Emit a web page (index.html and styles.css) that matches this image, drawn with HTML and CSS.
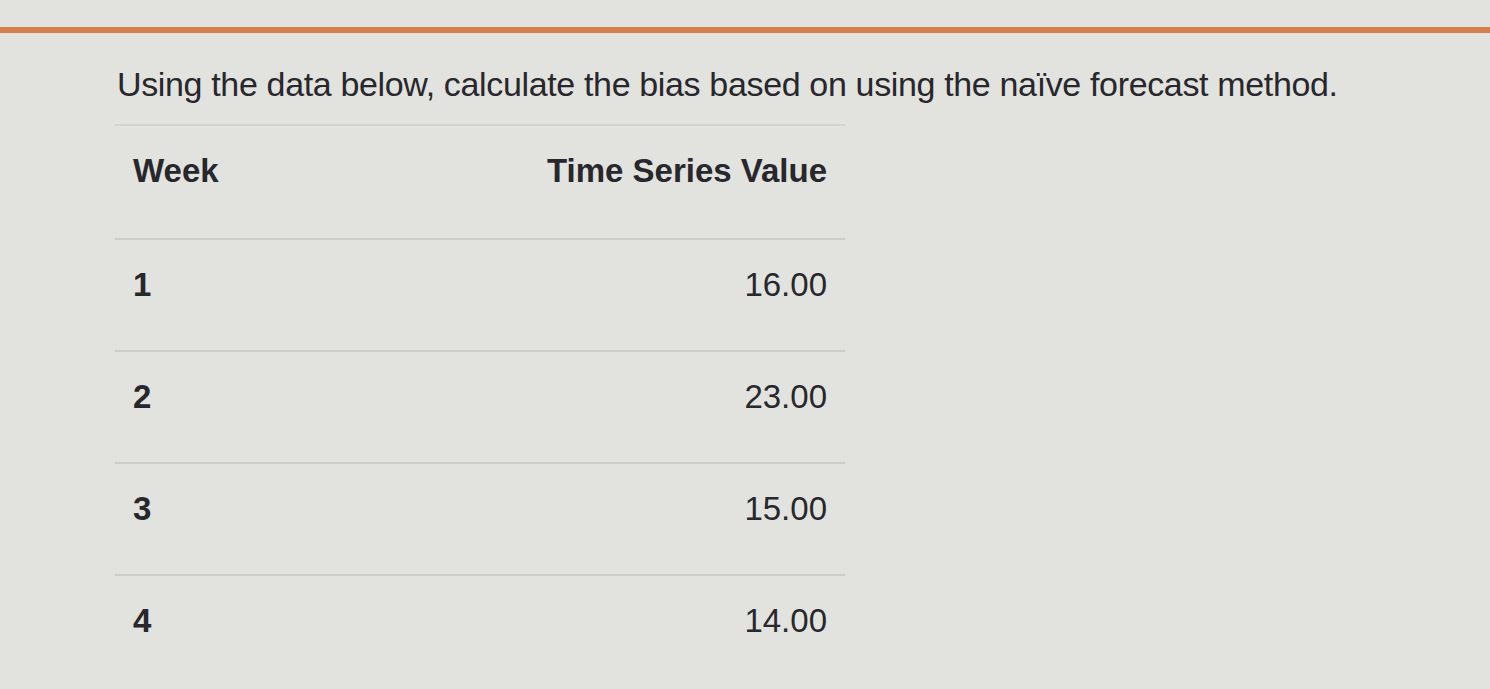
FILE: index.html
```html
<!DOCTYPE html>
<html>
<head>
<meta charset="utf-8">
<link rel="stylesheet" href="styles.css">
</head>
<body>
<div class="topbar"></div>
<main class="content">
  <h1 class="question">Using the data below, calculate the bias based on using the naïve forecast method.</h1>
  <table class="data">
    <thead>
      <tr><th class="col-week">Week</th><th class="col-value">Time Series Value</th></tr>
    </thead>
    <tbody>
      <tr><td class="col-week">1</td><td class="col-value">16.00</td></tr>
      <tr><td class="col-week">2</td><td class="col-value">23.00</td></tr>
      <tr><td class="col-week">3</td><td class="col-value">15.00</td></tr>
      <tr><td class="col-week">4</td><td class="col-value">14.00</td></tr>
    </tbody>
  </table>
</main>
</body>
</html>
```
FILE: styles.css
```css
html, body {
  margin: 0;
  padding: 0;
  background: #e2e2df;
  height: 100%;
  overflow: hidden;
}
body {
  font-family: "Liberation Sans", Arial, sans-serif;
  color: #27272c;
}
.topbar {
  height: 6px;
  margin-top: 27px;
  background: #d77f4b;
}
.content {
  padding-left: 115px;
}
.question {
  margin: 27px 0 0 2px;
  font-weight: normal;
  font-size: 34px;
  line-height: 48px;
  letter-spacing: -0.35px;
}
.data {
  margin-top: 16px;
  width: 730px;
  border-collapse: collapse;
  border-top: 2px solid #d3d3d0;
}
.data th, .data td {
  height: 90px;
  padding: 0 18px 20px 18px;
  border-bottom: 2px solid #cdcdca;
  font-size: 33px;
  vertical-align: middle;
}
.data th {
  font-weight: bold;
  padding-bottom: 22px;
}
.col-week {
  text-align: left;
  font-weight: bold;
}
.col-value {
  text-align: right;
  font-weight: normal;
  font-size: 34px;
}
.data th.col-value {
  font-weight: bold;
  font-size: 33px;
}
.data tbody tr:last-child td {
  border-bottom: none;
}
```
